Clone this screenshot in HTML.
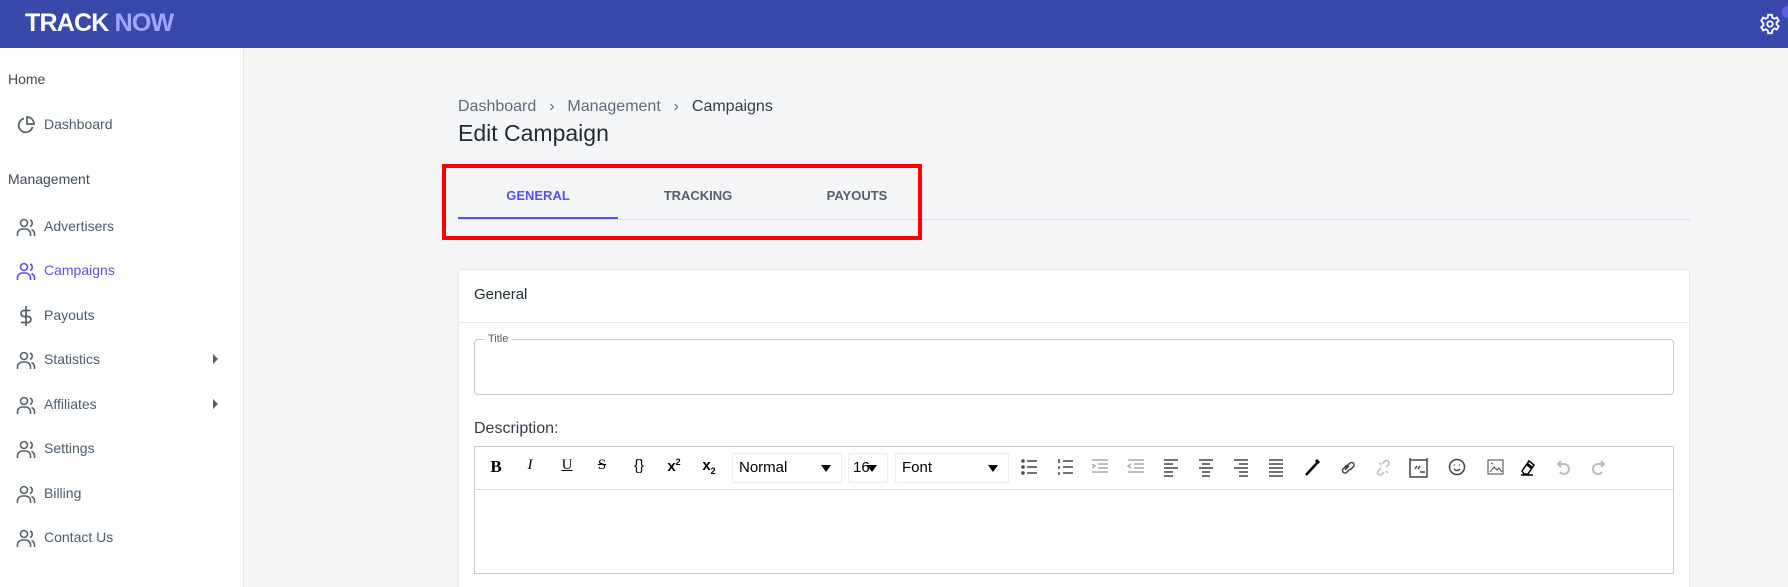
<!DOCTYPE html>
<html><head><meta charset="utf-8"><style>
*{box-sizing:border-box;margin:0;padding:0}
html{width:1788px;height:587px;overflow:hidden}
body{width:1788px;height:587px;overflow:hidden;background:#f4f5f7;font-family:"Liberation Sans",sans-serif;position:relative}
.a{position:absolute}
.hdr{left:0;top:0;width:1788px;height:48px;background:#3949ab}
.logo{left:25px;top:9px;font-size:25px;font-weight:bold;color:#fff;letter-spacing:-0.8px}
.side{left:0;top:48px;width:244px;height:539px;background:#fff;border-right:1px solid #e3e5e8}
.sec{left:8px;font-size:14px;color:#3e4a56}
.it{left:44px;font-size:14px;color:#4b5b6b;font-weight:500}
.ic{left:16px}
.arr{left:213px;width:0;height:0;border-left:5px solid #55606b;border-top:5px solid transparent;border-bottom:5px solid transparent}
.tb{position:absolute;top:457px;font-size:15px;color:#000;text-align:center;width:24px}
.sel{position:absolute;top:453px;height:30px;border:1px solid #eee;border-radius:2px;font-size:15px;padding:5px 6px;color:#000}
.sel:after{content:"";position:absolute;right:10px;top:11px;border-top:7px solid #000;border-left:5px solid transparent;border-right:5px solid transparent}
</style></head><body>
<div class="a hdr"></div>
<div class="a logo">TRACK <span style="color:#9fa8ff">NOW</span></div>
<svg class="a" style="left:1759px;top:13px" width="22" height="22" viewBox="0 0 24 24" fill="none" stroke="#fff" stroke-width="2"><circle cx="12" cy="12" r="3"/><path d="M10 2h4l.5 3 2.2 1.2 2.8-1.2 2 3.5-2.3 1.8v2.4l2.3 1.8-2 3.5-2.8-1.2L14.5 19 14 22h-4l-.5-3-2.2-1.2-2.8 1.2-2-3.5 2.3-1.8v-2.4L2.5 8.5l2-3.5 2.8 1.2L9.5 5z"/></svg>
<div class="a" style="left:1782px;top:6px;width:12px;height:12px;border-radius:6px;background:#5c5cf0"></div>

<div class="a side"></div>
<div class="a sec" style="top:71px">Home</div>
<svg class="a ic" style="top:115px" width="20" height="20" viewBox="0 0 20 20" fill="none" stroke="#55606b" stroke-width="1.7"><path d="M8 3.5A7 7 0 1 0 16.5 12"/><path d="M11 2v7h7A7 7 0 0 0 11 2z"/></svg>
<div class="a it" style="top:116px">Dashboard</div>
<div class="a sec" style="top:171px">Management</div>
<div class="a it" style="top:218px">Advertisers</div>
<div class="a it" style="top:262px;color:#5a4ff0">Campaigns</div>
<div class="a it" style="top:307px">Payouts</div>
<div class="a it" style="top:351px">Statistics</div>
<div class="a it" style="top:396px">Affiliates</div>
<div class="a it" style="top:440px">Settings</div>
<div class="a it" style="top:485px">Billing</div>
<div class="a it" style="top:529px">Contact Us</div>
<svg class="a" style="left:19px;top:305px" width="14" height="22" viewBox="0 0 14 22" fill="none" stroke="#55606b" stroke-width="1.7"><path d="M7 1v20M11.5 5.5H5a3 3 0 0 0 0 6h4a3 3 0 0 1 0 6H2"/></svg>
<svg width="0" height="0" style="position:absolute"><defs><g id="u" fill="none" stroke-width="1.6"><circle cx="8" cy="6" r="3.5"/><path d="M1.5 19v-2a5 5 0 0 1 5-5h3a5 5 0 0 1 5 5v2M14 3a3.5 3.5 0 0 1 0 6.5M18.5 19v-2a5 5 0 0 0-3-4.5"/></g></defs></svg>
<svg class="a" style="left:16px;top:217px" width="21" height="21" stroke="#55606b"><use href="#u"/></svg>
<svg class="a" style="left:16px;top:261px" width="21" height="21" stroke="#5a4ff0"><use href="#u"/></svg>
<svg class="a" style="left:16px;top:350px" width="21" height="21" stroke="#55606b"><use href="#u"/></svg>
<svg class="a" style="left:16px;top:395px" width="21" height="21" stroke="#55606b"><use href="#u"/></svg>
<svg class="a" style="left:16px;top:439px" width="21" height="21" stroke="#55606b"><use href="#u"/></svg>
<svg class="a" style="left:16px;top:484px" width="21" height="21" stroke="#55606b"><use href="#u"/></svg>
<svg class="a" style="left:16px;top:528px" width="21" height="21" stroke="#55606b"><use href="#u"/></svg>
<div class="a arr" style="top:354px"></div>
<div class="a arr" style="top:399px"></div>

<div class="a" style="left:458px;top:98px;font-size:16px;color:#5d6a78;word-spacing:2px">Dashboard &nbsp;›&nbsp; Management &nbsp;›&nbsp; <span style="color:#333c46">Campaigns</span></div>
<div class="a" style="left:458px;top:120px;font-size:23px;color:#222b35;font-weight:500">Edit Campaign</div>
<div class="a" style="left:458px;top:219px;width:1232px;height:1px;background:#d8dbe0"></div>
<div class="a" style="left:458px;top:217px;width:160px;height:2px;background:#5a4ff0"></div>
<div class="a" style="left:488px;top:188px;width:100px;text-align:center;font-size:13px;font-weight:bold;color:#5a4ff0">GENERAL</div>
<div class="a" style="left:648px;top:188px;width:100px;text-align:center;font-size:13px;font-weight:bold;color:#555f6b">TRACKING</div>
<div class="a" style="left:807px;top:188px;width:100px;text-align:center;font-size:13px;font-weight:bold;color:#555f6b">PAYOUTS</div>
<div class="a" style="left:442px;top:164px;width:480px;height:76px;border:4px solid #f00"></div>

<div class="a" style="left:458px;top:269px;width:1232px;height:318px;background:#fff;border:1px solid #e6e8eb;border-bottom:none;border-radius:4px 4px 0 0"></div>
<div class="a" style="left:474px;top:286px;font-size:15px;color:#1f2933">General</div>
<div class="a" style="left:458px;top:322px;width:1232px;height:1px;background:#e6e8eb"></div>
<div class="a" style="left:474px;top:339px;width:1200px;height:56px;border:1px solid #c4c8cc;border-radius:4px"></div>
<div class="a" style="left:484px;top:333px;background:#fff;padding:0 4px;font-size:11px;color:#555f6b">Title</div>
<div class="a" style="left:474px;top:420px;font-size:16px;color:#333c46">Description:</div>
<div class="a" style="left:474px;top:446px;width:1200px;height:128px;border:1px solid #ccc"></div>
<div class="a" style="left:475px;top:489px;width:1198px;height:1px;background:#ddd"></div>

<div class="tb" style="left:484px;font-weight:bold;font-family:'Liberation Serif',serif;font-size:17px">B</div>
<div class="tb" style="left:518px;font-style:italic;font-family:'Liberation Serif',serif">I</div>
<div class="tb" style="left:555px;text-decoration:underline;font-family:'Liberation Serif',serif">U</div>
<div class="tb" style="left:590px;text-decoration:line-through;font-family:'Liberation Serif',serif">S</div>
<div class="tb" style="left:627px">{}</div>
<div class="tb" style="left:662px;font-weight:bold">x<sup style="font-size:9px">2</sup></div>
<div class="tb" style="left:697px;font-weight:bold">x<sub style="font-size:9px">2</sub></div>
<div class="sel" style="left:732px;width:110px">Normal</div>
<div class="sel" style="left:848px;width:40px;padding-left:4px">16</div>
<div class="sel" style="left:895px;width:114px">Font</div>
<svg class="a" style="left:1021px;top:458px" width="640" height="20" fill="none" stroke="#444" stroke-width="1.5">
<g><path d="M6 3h10M6 9h10M6 15h10"/><circle cx="2" cy="3" r="1"/><circle cx="2" cy="9" r="1"/><circle cx="2" cy="15" r="1"/></g>
<g transform="translate(36 0)"><path d="M6 3h10M6 9h10M6 15h10M2 1v4M2 8v3M2 14v3"/></g>
<g transform="translate(70 0)" stroke="#aaa"><path d="M1 2h16M7 6h10M7 10h10M1 14h16M1 6l3 2-3 2"/></g>
<g transform="translate(106 0)" stroke="#aaa"><path d="M1 2h16M7 6h10M7 10h10M1 14h16M4 6l-3 2 3 2"/></g>
<g transform="translate(142 0)"><path d="M1 2h14M1 6h9M1 10h14M1 14h9M1 18h9"/></g>
<g transform="translate(177 0)"><path d="M1 2h14M4 6h8M1 10h14M4 14h8M4 18h8"/></g>
<g transform="translate(212 0)"><path d="M1 2h14M6 6h9M1 10h14M6 14h9M6 18h9"/></g>
<g transform="translate(247 0)"><path d="M1 2h14M1 6h14M1 10h14M1 14h14M1 18h14"/></g>
<g transform="translate(283 0)" stroke="#000" stroke-width="2.5"><path d="M2 17l11-12"/><path d="M12 2l3 3" stroke-width="3"/></g>
<g transform="translate(317 0)"><path d="M7 10l5-5a2.5 2.5 0 0 1 3.5 3.5L12 12M9 7l-4 4a2.5 2.5 0 0 0 3.5 3.5L12 11M7 12l4-4"/></g>
<g transform="translate(352 0)" stroke="#bbb"><path d="M9 6l3-3a2.5 2.5 0 0 1 3.5 3.5L13 9M8 10l-3 3a2.5 2.5 0 0 0 3.5 3.5L11 14M6 5l2 2M13 13l2 2"/></g>
<g transform="translate(389 -2)"><rect x="0" y="1" width="17" height="20"/><path d="M0 4h17M5 13l2-3M8 13l2-3M10 16h5"/></g>
<g transform="translate(428 0)"><circle cx="8" cy="9" r="7.5"/><path d="M5 11q3 3 6 0M5.5 6.5v1M10.5 6.5v1"/></g>
<g transform="translate(466 0)" stroke-width="1"><rect x="1" y="2" width="15" height="14"/><path d="M3 14l4-5 3 3 2-2 3 4M4 5l2 1"/></g>
<g transform="translate(498 0)" stroke="#000"><path d="M3 13l7-10 5 4-6 9H5zM2 17h12"/><path d="M8 6l5 4" stroke-width="3"/></g>
<g transform="translate(535 0)" stroke="#bbb" stroke-width="2"><path d="M5 3L2 6l3 3M2 6h6a5 5 0 1 1-4 8"/></g>
<g transform="translate(569 0)" stroke="#bbb" stroke-width="2"><path d="M11 3l3 3-3 3M14 6H8a5 5 0 1 0 4 8"/></g>
</svg>
</body></html>
